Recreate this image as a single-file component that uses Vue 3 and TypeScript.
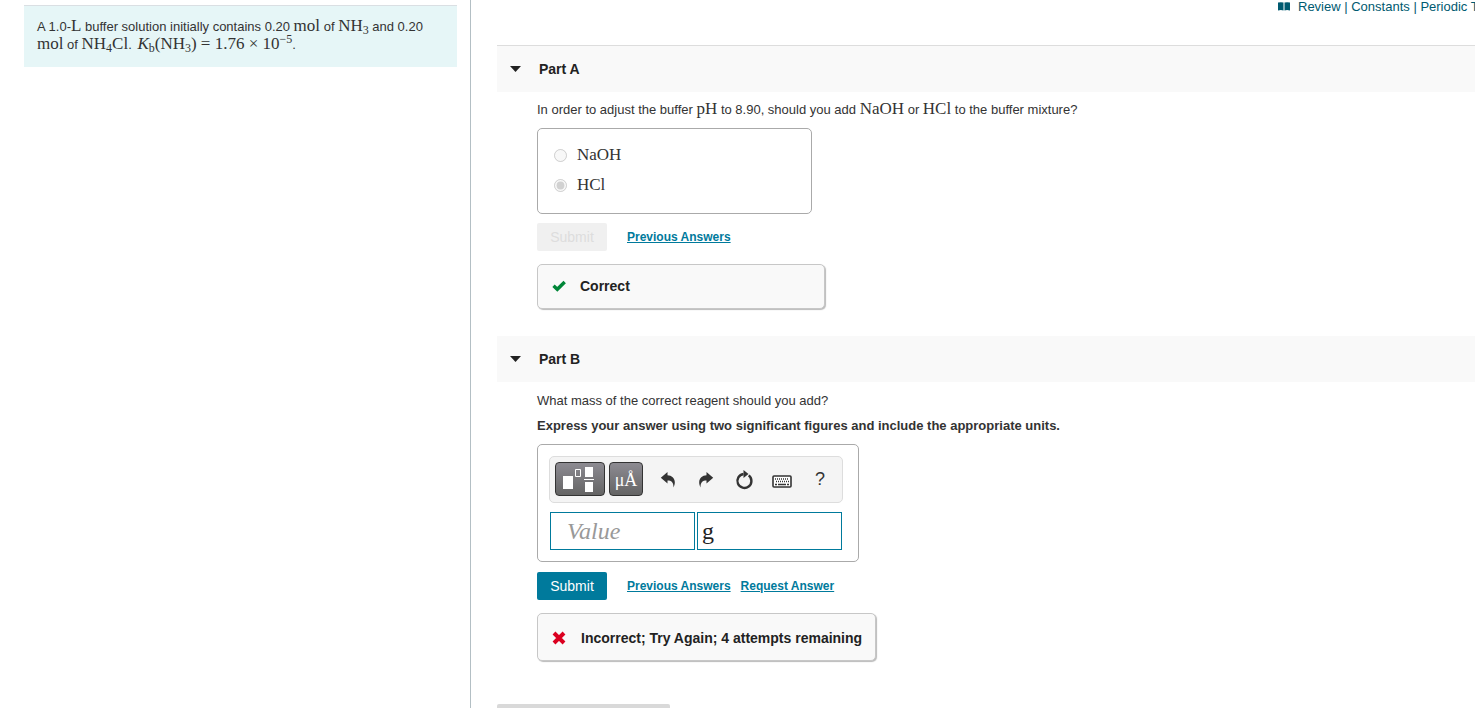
<script setup lang="ts">
import { ref } from 'vue'

const reagent = ref('HCl')
const amount = ref('')
const unit = ref('g')
const reagents = ['NaOH', 'HCl']
</script>

<template>
  <div class="page">
    <aside class="sidebar">
      <div class="problem">
        A 1.0-<span class="m">L</span> buffer solution initially contains 0.20 <span class="m">mol</span> of
        <span class="m">NH<sub>3</sub></span> and 0.20 <span class="m">mol</span> of
        <span class="m">NH<sub>4</sub>Cl</span>.
        <span class="m eq"><i>K</i><sub>b</sub>(NH<sub>3</sub>) = 1.76 × 10<sup>−5</sup></span>.
      </div>
    </aside>

    <main class="content">
      <nav class="resources">
        <svg class="book" viewBox="0 0 12 9" aria-hidden="true">
          <path d="M0 .5Q3 -.2 5.500 .5V8.500Q3 7.500 0 8.500ZM6.500 .5Q9 -.2 12 .5V8.500Q9 7.500 6.500 8.500Z" fill="#005a70" />
        </svg>
        <a href="#">Review</a> | <a href="#">Constants</a> | <a href="#">Periodic Table</a>
      </nav>

      <section class="part first">
        <h2 class="part-title">
          <svg class="caret" viewBox="0 0 11 6" aria-hidden="true"><path d="M0 0H11L5.5 6Z" fill="#222" /></svg>
          Part A
        </h2>
        <div class="part-body">
          <p class="question">
            In order to adjust the buffer <span class="m">pH</span> to 8.90, should you add
            <span class="m">NaOH</span> or <span class="m">HCl</span> to the buffer mixture?
          </p>
          <div class="box choices">
            <label v-for="r in reagents" :key="r" class="choice">
              <input v-model="reagent" type="radio" name="reagent" :value="r" disabled />
              <span class="m">{{ r }}</span>
            </label>
          </div>
          <div class="actions">
            <button class="submit" type="button" disabled>Submit</button>
            <a href="#">Previous Answers</a>
          </div>
          <div class="feedback correct">
            <svg class="mark" viewBox="0 0 14 12" aria-hidden="true">
              <path d="M1.500 5.800L5.300 9.300L12.700 2" fill="none" stroke="#008638" stroke-width="3.400" />
            </svg>
            Correct
          </div>
        </div>
      </section>

      <section class="part">
        <h2 class="part-title">
          <svg class="caret" viewBox="0 0 11 6" aria-hidden="true"><path d="M0 0H11L5.5 6Z" fill="#222" /></svg>
          Part B
        </h2>
        <div class="part-body">
          <p class="question">What mass of the correct reagent should you add?</p>
          <p class="question hint">Express your answer using two significant figures and include the appropriate units.</p>
          <div class="box editor">
            <div class="toolbar">
              <button class="dark templates" type="button" aria-label="Templates">
                <svg width="32" height="26" viewBox="0 0 32 26">
                  <path d="M0 10H10V23H0ZM22 1H30V11H22ZM21 13H31V14H21ZM22 16H30V26H22Z" fill="#fff" />
                  <path d="M12.500 3.500H17.500V10.500H12.500Z" fill="none" stroke="#fff" />
                </svg>
              </button>
              <button class="dark symbols" type="button" aria-label="Symbols">μÅ</button>
              <button class="tool" type="button" aria-label="Undo">
                <svg width="16" height="16" viewBox="0 0 16 16">
                  <path d="M7.500 0V3.200C13 3.400 17 8 13.500 15.500C13.600 10.500 11.500 8.600 7.500 8.600V11.500L.8 5.800Z" fill="#333" />
                </svg>
              </button>
              <button class="tool" type="button" aria-label="Redo">
                <svg width="16" height="16" viewBox="0 0 16 16">
                  <path d="M8.500 0V3.200C3 3.400 -1 8 2.500 15.500C2.400 10.500 4.500 8.600 8.500 8.600V11.500L15.200 5.800Z" fill="#333" />
                </svg>
              </button>
              <button class="tool" type="button" aria-label="Reset">
                <svg width="18" height="20" viewBox="0 0 18 20">
                  <path d="M13.700 5.400A7 7 0 1 1 8.500 4" fill="none" stroke="#333" stroke-width="2.400" />
                  <path d="M8.500 0L13.500 4L8.500 8Z" fill="#333" />
                </svg>
              </button>
              <button class="tool" type="button" aria-label="Keyboard shortcuts">
                <svg class="keys" width="20" height="13" viewBox="0 0 20 13">
                  <rect x="1" y="1" width="18" height="11" rx="1" fill="#fff" stroke="#333" stroke-width="1.600" />
                  <path d="M3 4H17M4 6.500H17" stroke="#333" stroke-width="1.300" stroke-dasharray="1 1" />
                  <path d="M3 9.500H5M6 9.500H14M15 9.500H17" stroke="#333" stroke-width="1.300" />
                </svg>
              </button>
              <button class="tool help" type="button" aria-label="Help">?</button>
            </div>
            <div class="fields">
              <input v-model="amount" class="value" type="text" placeholder="Value" aria-label="Value" />
              <input v-model="unit" class="unit" type="text" aria-label="Units" />
            </div>
          </div>
          <div class="actions">
            <button class="submit" type="button">Submit</button>
            <a href="#">Previous Answers</a>
            <a href="#">Request Answer</a>
          </div>
          <div class="feedback incorrect">
            <svg class="mark" viewBox="0 0 14 14" aria-hidden="true">
              <path d="M2 2L12 12M12 2L2 12" stroke="#db0020" stroke-width="4" />
            </svg>
            Incorrect; Try Again; 4 attempts remaining
          </div>
        </div>
      </section>
      <div class="next"></div>
    </main>
  </div>
</template>

<style>
body {
  margin: 0;
  background: #fff;
}
</style>

<style scoped>
.page {
  display: flex;
  height: 100vh;
  overflow: hidden;
  font-family: "Liberation Sans", Arial, sans-serif;
  font-size: 13px;
  line-height: 18px;
  color: #333;
}
.sidebar {
  flex: 0 0 433px;
  padding: 5px 13px 0 24px;
  border-right: 1px solid #b3bfc4;
}
.problem {
  padding: 12px 13px 13px;
  border-top: 1px solid #dadfe3;
  background: #e6f6f7;
}
.m {
  font-family: "Liberation Serif", "Times New Roman", serif;
  font-size: 17px;
  line-height: 16px;
}
.eq {
  margin-left: 2px;
  white-space: nowrap;
}
sub,
sup {
  font-size: 12px;
  line-height: 0;
}
sub {
  vertical-align: -3px;
}
sup {
  vertical-align: 6px;
}
.content {
  flex: 1;
  min-width: 0;
  padding-left: 26px;
  overflow: hidden;
}
.resources {
  width: 197px;
  height: 45px;
  margin-left: auto;
  line-height: 14px;
  white-space: nowrap;
  overflow: hidden;
  color: #005a70;
}
.resources a {
  color: #005a70;
  text-decoration: none;
}
.book {
  width: 12px;
  height: 9px;
  margin-right: 8px;
}
.book + a {
  margin-left: 0;
}
.part.first {
  border-top: 1px solid #ddd;
}
.part-title {
  display: flex;
  align-items: center;
  gap: 18px;
  height: 46px;
  margin: 0;
  padding-left: 13px;
  background: #f9f9f9;
  font-size: 14px;
  color: #222;
}
.caret {
  width: 11px;
  height: 6px;
}
.part-body {
  padding: 9px 0 27px 40px;
}
.question {
  margin: 0 0 9px;
}
.part + .part .part-body {
  padding-top: 10px;
}
.question + .question {
  margin-top: -2px;
}
.hint {
  font-weight: bold;
}
.box {
  box-sizing: border-box;
  border: 1px solid #aaa;
  border-radius: 5px;
}
.choices {
  width: 275px;
  height: 86px;
  padding: 11px 16px;
}
.choice {
  display: flex;
  align-items: center;
  gap: 10px;
  height: 30px;
}
.choice input {
  width: 13px;
  height: 13px;
  margin: 1px 0 0;
}
.actions {
  display: flex;
  align-items: center;
  gap: 10px;
  margin: 9px 0 13px;
}
.actions a {
  font-size: 12px;
  font-weight: bold;
  color: #007a9c;
}
.submit {
  width: 70px;
  height: 28px;
  margin-right: 10px;
  padding: 0;
  border: 0;
  border-radius: 2px;
  background: #007a9c;
  color: #fff;
  font-family: inherit;
  font-size: 14px;
}
.submit:disabled {
  background: #f0f0f0;
  color: #ddd;
}
.feedback {
  display: flex;
  align-items: center;
  box-sizing: border-box;
  border: 1px solid #c7c7c7;
  border-radius: 5px;
  box-shadow: 1px 1px 1px #bbb;
  background: #f9f9f9;
  padding-left: 14px;
  font-size: 14px;
  font-weight: bold;
  color: #222;
}
.correct {
  width: 288px;
  height: 45px;
  gap: 14px;
  padding-bottom: 2px;
}
.incorrect {
  width: 339px;
  height: 48px;
  gap: 15px;
  padding-top: 2px;
}
.mark {
  width: 14px;
}
.editor {
  width: 322px;
  margin-bottom: 10px;
  padding: 11px;
}
.toolbar {
  display: flex;
  align-items: center;
  box-sizing: border-box;
  width: 294px;
  height: 47px;
  padding: 0 5px;
  border: 1px solid #ddd;
  border-radius: 5px;
  background: #f4f4f4;
}
.toolbar button {
  display: flex;
  flex: none;
  align-items: center;
  justify-content: center;
  box-sizing: border-box;
  height: 34px;
  padding: 0;
}
.toolbar .dark {
  margin: 0 4px 2px 0;
  border: 1px solid #333;
  border-radius: 4px;
  background: linear-gradient(#8d8b92, #646464);
  color: #fff;
}
.toolbar .templates {
  width: 50px;
  padding-right: 2px;
}
.toolbar .symbols {
  width: 34px;
  margin-right: 6px;
  padding-top: 4px;
  font-family: "Liberation Serif", serif;
  font-size: 18px;
}
.tool {
  width: 38px;
  border: 0;
  background: none;
  color: #333;
}
.keys {
  margin-top: 3px;
}
.help {
  font-family: "Liberation Sans", sans-serif;
  font-size: 18px;
}
.fields {
  display: flex;
  gap: 2px;
  margin: 9px 1px 0;
}
.fields input {
  box-sizing: border-box;
  width: 145px;
  height: 38px;
  border: 1px solid #007a9c;
  border-radius: 0;
  background: #fff;
  color: #222;
  font-family: "Liberation Serif", serif;
  font-size: 24px;
}
.fields .value {
  padding: 0 16px;
}
.fields .unit {
  padding: 0 4px;
}
.value::placeholder {
  color: #999;
  font-style: italic;
}
.next {
  width: 173px;
  height: 28px;
  margin-top: 16px;
  border-radius: 2px;
  background: #d9d9d9;
}
</style>
